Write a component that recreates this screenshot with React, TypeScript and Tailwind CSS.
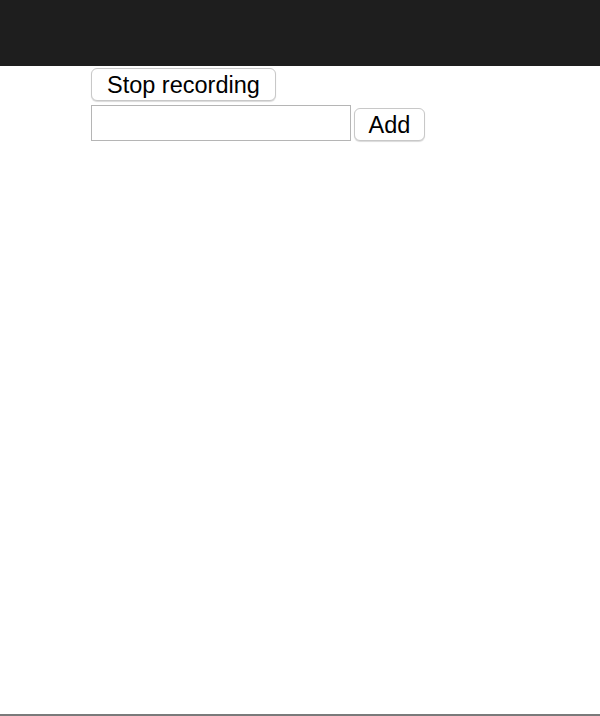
export default function App() {
  const font = { fontFamily: '"Liberation Sans", Arial, sans-serif' };
  return (
    <div className="w-[600px] h-[716px] bg-white flex flex-col" style={font}>
      <div className="h-[66px] bg-[#1e1e1e] shrink-0" />
      <div className="flex-1 pl-[91px] pt-[2px] flex flex-col items-start">
        <button className="h-[33px] px-[15px] pt-[3px] rounded-[6px] border border-[#c8c8c8] bg-white text-[23.5px] leading-none text-black shadow-[0_1px_1px_rgba(0,0,0,0.15)]">
          Stop recording
        </button>
        <div className="flex items-center mt-[4px]">
          <input
            className="w-[260px] h-[36px] border border-[#b5b5b5] bg-white outline-none"
            aria-label="item"
          />
          <button className="ml-[3px] mt-[2px] h-[33px] w-[71px] pt-[3px] rounded-[6px] border border-[#c8c8c8] bg-white text-[23.5px] leading-none text-black shadow-[0_1px_1px_rgba(0,0,0,0.15)]">
            Add
          </button>
        </div>
      </div>
      <div className="h-[2px] bg-[#7a7a7a] shrink-0" />
    </div>
  );
}
